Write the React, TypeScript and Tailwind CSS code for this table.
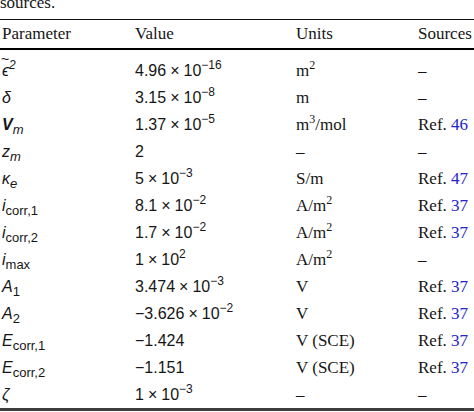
import React from 'react';

type Row = {
  param: React.ReactNode;
  value: React.ReactNode;
  units: React.ReactNode;
  source: React.ReactNode;
};

const serif = 'font-["Liberation_Serif","Times_New_Roman",serif]';
const sans = 'font-["Liberation_Sans",Arial,sans-serif]';

// small helpers for math-ish typesetting
const Sub = ({ children, italic }: { children: React.ReactNode; italic?: boolean }) => (
  <span className={`relative top-[4px] text-[13px] ${italic ? 'italic' : 'not-italic'}`}>{children}</span>
);

const Sup = ({ children }: { children: React.ReactNode }) => (
  <span className="relative -top-[7px] text-[12px]">{children}</span>
);

const USup = ({ children }: { children: React.ReactNode }) => (
  <span className="relative -top-[7px] text-[12px]">{children}</span>
);

const Sci = ({ m, e }: { m: string; e: string }) => (
  <span>
    {m}
    <span className="mx-[4px]">×</span>10<Sup>{e}</Sup>
  </span>
);

const Ref = ({ n }: { n: string }) => (
  <span>
    Ref. <span className="text-[#2424c8]">{n}</span>
  </span>
);

const Dash = () => <span>–</span>;

const rows: Row[] = [
  {
    param: (
      <span className="italic">
        <span className="relative inline-block">
          ϵ
          <span className="absolute left-[-1px] top-[-10px] text-[14px] not-italic">~</span>
        </span>
        <Sup>2</Sup>
      </span>
    ),
    value: <Sci m="4.96" e="−16" />,
    units: (
      <span>
        m<USup>2</USup>
      </span>
    ),
    source: <Dash />,
  },
  { param: <span className="italic">δ</span>, value: <Sci m="3.15" e="−8" />, units: 'm', source: <Dash /> },
  {
    param: (
      <span className="italic">
        <span className="font-bold">V</span>
        <Sub italic>m</Sub>
      </span>
    ),
    value: <Sci m="1.37" e="−5" />,
    units: (
      <span>
        m<USup>3</USup>/mol
      </span>
    ),
    source: <Ref n="46" />,
  },
  {
    param: (
      <span className="italic">
        z<Sub italic>m</Sub>
      </span>
    ),
    value: '2',
    units: <Dash />,
    source: <Dash />,
  },
  {
    param: (
      <span className="italic">
        κ<Sub italic>e</Sub>
      </span>
    ),
    value: <Sci m="5" e="−3" />,
    units: 'S/m',
    source: <Ref n="47" />,
  },
  {
    param: (
      <span className="italic">
        i<Sub>corr,1</Sub>
      </span>
    ),
    value: <Sci m="8.1" e="−2" />,
    units: (
      <span>
        A/m<USup>2</USup>
      </span>
    ),
    source: <Ref n="37" />,
  },
  {
    param: (
      <span className="italic">
        i<Sub>corr,2</Sub>
      </span>
    ),
    value: <Sci m="1.7" e="−2" />,
    units: (
      <span>
        A/m<USup>2</USup>
      </span>
    ),
    source: <Ref n="37" />,
  },
  {
    param: (
      <span className="italic">
        i<Sub>max</Sub>
      </span>
    ),
    value: <Sci m="1" e="2" />,
    units: (
      <span>
        A/m<USup>2</USup>
      </span>
    ),
    source: <Dash />,
  },
  {
    param: (
      <span className="italic">
        A<Sub>1</Sub>
      </span>
    ),
    value: <Sci m="3.474" e="−3" />,
    units: 'V',
    source: <Ref n="37" />,
  },
  {
    param: (
      <span className="italic">
        A<Sub>2</Sub>
      </span>
    ),
    value: <Sci m="−3.626" e="−2" />,
    units: 'V',
    source: <Ref n="37" />,
  },
  {
    param: (
      <span className="italic">
        E<Sub>corr,1</Sub>
      </span>
    ),
    value: '−1.424',
    units: 'V (SCE)',
    source: <Ref n="37" />,
  },
  {
    param: (
      <span className="italic">
        E<Sub>corr,2</Sub>
      </span>
    ),
    value: '−1.151',
    units: 'V (SCE)',
    source: <Ref n="37" />,
  },
  { param: <span className="italic">ζ</span>, value: <Sci m="1" e="−3" />, units: <Dash />, source: <Dash /> },
];

export default function App() {
  return (
    <div className="w-[474px] h-[412px] overflow-hidden bg-white text-[#161616]">
      {/* caption tail, cut off by the crop */}
      <div className={`${serif} text-[17px] leading-[17px] mt-[-6px] mb-[8px] whitespace-nowrap`}>sources.</div>

      <div className="h-[1px] bg-[#111]" />

      {/* header */}
      <div className={`${serif} text-[17px] grid grid-cols-[133px_161px_122px_1fr] h-[28px] items-center pl-[2px] whitespace-nowrap`}>
        <div>Parameter</div>
        <div>Value</div>
        <div>Units</div>
        <div>Sources</div>
      </div>
      <div className="h-[2px] bg-black" />

      <div className="pt-[7px]">
        {rows.map((r, i) => (
          <div
            key={i}
            className="grid grid-cols-[133px_161px_122px_1fr] h-[27px] items-center pl-[2px] whitespace-nowrap"
          >
            <div className={`${sans} text-[16px]`}>{r.param}</div>
            <div className={`${sans} text-[16px]`}>{r.value}</div>
            <div className={`${serif} text-[17px]`}>{r.units}</div>
            <div className={`${serif} text-[17px]`}>{r.source}</div>
          </div>
        ))}
      </div>
      <div className="h-[3px] bg-[#3c3c3c]" />
    </div>
  );
}
